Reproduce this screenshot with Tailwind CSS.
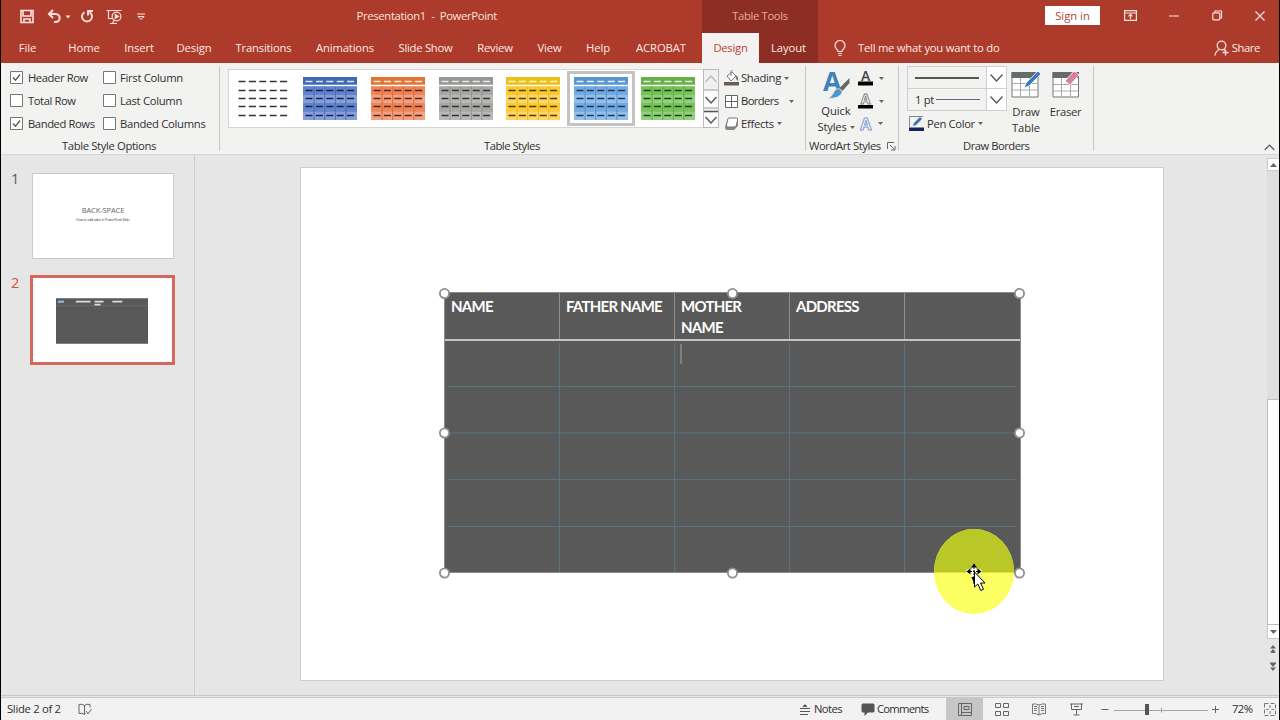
<!DOCTYPE html>
<html lang="en">
<head>
    <meta charset="UTF-8">
    <meta name="viewport" content="width=device-width, initial-scale=1.0">
    <title>Presentation1 - PowerPoint</title>
    <script src="https://cdn.jsdelivr.net/npm/@tailwindcss/browser@4"></script>
</head>
<body class="w-[1280px] h-[720px] overflow-hidden bg-[#e6e6e6]">
<div class="w-[1280px] h-[720px] flex flex-col border-x border-black font-['Open_Sans','Noto_Sans',sans-serif] text-[11.25px] leading-4 text-[#303030] whitespace-nowrap">

    <!-- Title bar -->
    <div class="h-[33px] shrink-0 bg-[#ad3b2c] text-[#fbe3dd] flex">
        <div class="w-[701px] flex items-center relative">
            <svg class="ml-[19px]" width="14" height="15" viewBox="0 0 14 15" fill="none" stroke="#fbe3dd" stroke-width="1.6"><path d="M1 1.5h12v12H1z"/><path d="M3 2v5h8V2M4 13.500v-3.500h6v3.500"/></svg>
            <svg class="ml-[13px]" width="15" height="15" viewBox="0 0 15 15" fill="none" stroke="#fbe3dd" stroke-width="2"><path d="M6 1 2 5l4 4M2 5h6.500c5.500 0 5.500 8 0 8H7"/></svg>
            <svg class="ml-[3px]" width="6" height="4" viewBox="0 0 6 4"><path d="M0.500 .5h5L3 3.500z" fill="#fbe3dd"/></svg>
            <svg class="ml-[9px]" width="14" height="15" viewBox="0 0 14 15" fill="none" stroke="#fbe3dd" stroke-width="1.900"><path d="M4.500 3.200a5 5 0 1 0 5 0"/><path d="M8 6.500V2h5"/></svg>
            <svg class="ml-[12px]" width="17" height="16" viewBox="0 0 17 16" fill="none" stroke="#fbe3dd" stroke-width="1.200"><path d="M.5 1.500h15M2.500 2v7.500h4M4 14.500h7M6.500 14l2-3"/><circle cx="10.500" cy="7.500" r="4.400"/><path d="m9.300 5.500 3.200 2-3.200 2z" fill="#fbe3dd"/></svg>
            <svg class="ml-[14px]" width="8" height="8" viewBox="0 0 8 8" fill="none" stroke="#fbe3dd"><path d="M0 1h8M1 3.500h6L4 6.500z"/></svg>
            <span class="absolute left-[355.5px] top-[8px] whitespace-pre tracking-[-0.31px]">Presentation1  -  PowerPoint</span>
        </div>
        <div class="w-[116px] bg-[#8c2e24] flex items-center justify-center text-[#e8a99f]"><span class="-mt-px tracking-[-0.35px]">Table Tools</span></div>
        <div class="flex-1 flex items-center pb-[2px]">
            <div class="ml-[227px] w-[55px] h-[19px] bg-white text-[#b34435] text-center leading-[19px]">Sign in</div>
            <svg class="ml-[24px]" width="13" height="11" viewBox="0 0 13 11" fill="none" stroke="#fbe3dd" stroke-width="1.200"><path d="M.6.600h11.800v9.800H.6zM.6 3h11.800M6.500 9V4.500M4.500 6.300l2-2 2 2"/></svg>
            <svg class="ml-[32px]" width="10" height="2" viewBox="0 0 10 2"><path d="M0 1h10" stroke="#fbe3dd"/></svg>
            <svg class="ml-[33px]" width="11" height="11" viewBox="0 0 11 11" fill="none" stroke="#fbe3dd" stroke-width="1.200"><rect x=".8" y="2.800" width="7" height="7" rx="1"/><path d="M3 2.500V1h6.500v7H8"/></svg>
            <svg class="ml-[32px]" width="10" height="10" viewBox="0 0 10 10" stroke="#fbe3dd" stroke-width="1.200"><path d="m.5.500 9 9m0-9-9 9"/></svg>
        </div>
    </div>

    <!-- Ribbon tabs -->
    <div class="h-[30px] shrink-0 bg-[#ad3b2c] text-[#fdeae6] flex text-center leading-[30px] tracking-[-0.1px]">
        <div class="w-[53px]">File</div>
        <div class="w-[60px]">Home</div>
        <div class="w-[50px]">Insert</div>
        <div class="w-[60px]">Design</div>
        <div class="w-[79px] tracking-[-0.2px]">Transitions</div>
        <div class="w-[84px] tracking-[-0.15px]">Animations</div>
        <div class="w-[77px] tracking-[-0.25px]">Slide Show</div>
        <div class="w-[62px] tracking-[-0.25px]">Review</div>
        <div class="w-[47px]">View</div>
        <div class="w-[50px]">Help</div>
        <div class="w-[76px]">ACROBAT</div>
        <div class="w-[3px]"></div>
        <div class="w-[57px] bg-[#f3f2f1] text-[#b34435] tracking-[-0.25px]">Design</div>
        <div class="w-[59px] bg-[#8c2e24]">Layout</div>
        <svg class="ml-[16px] mt-[7px]" width="12" height="17" viewBox="0 0 12 17" fill="none" stroke="#fbe3dd" stroke-width="1.200"><path d="M4 11.500c0-2-3-3-3-6a5 5 0 0 1 10 0c0 3-3 4-3 6zM4 13.500h4M4.500 15.500h3"/></svg>
        <div class="ml-[12px] tracking-[-0.24px]">Tell me what you want to do</div>
        <div class="flex-1"></div>
        <svg class="mt-[7px]" width="16" height="17" viewBox="0 0 16 17" fill="none" stroke="#fbe3dd" stroke-width="1.300"><circle cx="7.500" cy="5.500" r="4.300"/><path d="M1 15.500c.5-3.500 2-5 4.500-6M9.500 9.500l2 1.500M11.500 9.500v6M8.500 12.500h6"/></svg>
        <div class="ml-[2px] mr-[19px] tracking-[-0.4px]">Share</div>
    </div>

    <!-- Ribbon -->
    <div class="h-[92px] shrink-0 bg-[#f2f2f1] border-b border-[#d6d6d6] flex tracking-[-0.35px]">
        <div class="w-[219px] flex flex-col border-r border-[#c8c8c8] my-[3px]">
            <div class="flex h-[72px] shrink-0 pl-[9px] pt-[1px]">
                <div class="w-[93px] flex flex-col tracking-[-0.42px]">
                    <div class="h-[22.7px] flex items-center"><svg class="mr-[5px] -mt-px" width="13" height="13" viewBox="0 0 13 13" fill="#fff" stroke="#777"><path d="M.5.500h12v12H.5z"/><path d="m3 6.500 2.500 2.800L10 3.500" fill="none" stroke="#555" stroke-width="1.300"/></svg>Header Row</div>
                    <div class="h-[22.7px] flex items-center"><svg class="mr-[5px] -mt-px" width="13" height="13" viewBox="0 0 13 13" fill="#fff" stroke="#777"><path d="M.5.500h12v12H.5z"/></svg>Total Row</div>
                    <div class="h-[22.7px] flex items-center"><svg class="mr-[5px] -mt-px" width="13" height="13" viewBox="0 0 13 13" fill="#fff" stroke="#777"><path d="M.5.500h12v12H.5z"/><path d="m3 6.500 2.500 2.800L10 3.500" fill="none" stroke="#555" stroke-width="1.300"/></svg>Banded Rows</div>
                </div>
                <div class="flex flex-col tracking-[-0.3px]">
                    <div class="h-[22.7px] flex items-center"><svg class="mr-[4px] -mt-px" width="13" height="13" viewBox="0 0 13 13" fill="#fff" stroke="#777"><path d="M.5.500h12v12H.5z"/></svg>First Column</div>
                    <div class="h-[22.7px] flex items-center"><svg class="mr-[4px] -mt-px" width="13" height="13" viewBox="0 0 13 13" fill="#fff" stroke="#777"><path d="M.5.500h12v12H.5z"/></svg>Last Column</div>
                    <div class="h-[22.7px] flex items-center"><svg class="mr-[4px] -mt-px" width="13" height="13" viewBox="0 0 13 13" fill="#fff" stroke="#777"><path d="M.5.500h12v12H.5z"/></svg>Banded Columns</div>
                </div>
            </div>
            <div class="text-center pr-[2px]">Table Style Options</div>
        </div>

        <div class="w-[586px] flex flex-col border-r border-[#c8c8c8] my-[3px] pl-[8px]">
            <div class="flex h-[72px] shrink-0 pt-[3px]">
                <div id="gallery" class="w-[475px] h-[59px] bg-white border border-r-0 border-[#d5d5d5] flex items-center"></div>
                <div class="w-[16px] h-[59px] flex flex-col border border-[#bbb]">
                    <svg width="14" height="57" viewBox="0 0 14 57" fill="none" stroke="#555" stroke-width="1.300"><path d="M0 0h14v19.500H0z" fill="#f0f0f0" stroke="none"/><path d="M0 20h14v18H0zM0 43h14v14H0z" fill="#fbfbfb" stroke="none"/><path d="M0 20h14M0 38h14" stroke="#bbb"/><path d="M0 41.500h14" stroke-width="1.500"/><path d="m1.500 12 5.500-6 5.500 6" stroke="#bbb"/><path d="m1.500 27 5.500 6 5.500-6M1.500 47l5.500 6 5.500-6"/></svg>
                </div>
                <div class="flex flex-col pl-[5px] -mt-[2px] tracking-[-0.3px]">
                    <div class="h-[22.7px] flex items-center"><svg class="mr-[1px]" width="16" height="16" viewBox="0 0 16 16"><path d="M0 12h15v3.500H0z" fill="#6b5a55"/><path d="m3 6 5-4 4 4-5 5z" fill="#fff" stroke="#777"/><path d="M7 6V1.500q0-1 1.500-1" fill="none" stroke="#777"/><path d="M11 5q4 1 3 6-2-1-3-6" fill="#5f7890"/></svg>Shading<svg class="ml-[3px]" width="5" height="3" viewBox="0 0 5 3"><path d="M0 0h5L2.500 3z" fill="#666"/></svg></div>
                    <div class="h-[22.7px] flex items-center"><svg class="mr-[3px] ml-px" width="13" height="13" viewBox="0 0 13 13" fill="#fff" stroke="#666"><path d="M.5.500h12v12H.5zM6.500.500v12M.5 6.500h12"/></svg><span class="tracking-[-0.6px]">Borders</span><svg class="ml-[10px]" width="5" height="3" viewBox="0 0 5 3"><path d="M0 0h5L2.500 3z" fill="#666"/></svg></div>
                    <div class="h-[22.7px] flex items-center"><svg class="mr-[2px]" width="15" height="14" viewBox="0 0 15 14"><path d="M3 4 1 10q0 3 2 3h7l4-4V3z" fill="#888"/><path d="M5 1h7q2 0 1.500 2l-1 5q-.5 2-2.500 2H4q-2 0-1.500-2l1-5Q3.800 1 5 1z" fill="#fff" stroke="#777"/></svg>Effects<svg class="ml-[3px]" width="5" height="3" viewBox="0 0 5 3"><path d="M0 0h5L2.500 3z" fill="#666"/></svg></div>
                </div>
            </div>
            <div class="pl-[256px] tracking-[-0.5px]">Table Styles</div>
        </div>

        <div class="w-[93px] flex flex-col border-r border-[#c8c8c8] my-[3px]">
            <div class="flex h-[72px] shrink-0">
                <div class="w-[51px] flex flex-col items-center pl-[9px] pt-[3px]">
                    <svg class="mb-[3px] shrink-0 ml-[2px] overflow-visible" width="28" height="31" viewBox="0 0 28 31"><text x="0" y="21.500" font-family="Open Sans" font-weight="700" font-size="27" fill="#3d82b8" textLength="18" lengthAdjust="spacingAndGlyphs">A</text><path d="M26.500 9v5l-7 8-3-3z" fill="#666"/><path d="M15.500 19.500q4 1 3.500 4-2 6-14 6 4-2 5-5 2-5 5.500-5z" fill="#4f97cc" stroke="#f2f2f1" stroke-width=".7"/></svg>
                    <div class="tracking-[-0.1px]">Quick</div>
                    <div class="flex items-center tracking-[-0.2px]">Styles<svg class="ml-[3px]" width="5" height="3" viewBox="0 0 5 3"><path d="M0 0h5L2.500 3z" fill="#666"/></svg></div>
                </div>
                <div class="flex flex-col pt-[1px]">
                    <div class="h-[22.7px] flex items-center"><svg class="overflow-visible" width="17" height="16" viewBox="0 0 17 16"><text x="8.500" y="11" text-anchor="middle" font-family="Open Sans" font-size="14" font-weight="600" fill="#444">A</text><path d="M1 11.500h15v4H1z"/></svg><svg class="ml-[5px]" width="5" height="3" viewBox="0 0 5 3"><path d="M0 0h5L2.500 3z" fill="#666"/></svg></div>
                    <div class="h-[22.7px] flex items-center"><svg class="overflow-visible" width="17" height="16" viewBox="0 0 17 16"><text x="8.500" y="11" text-anchor="middle" font-family="Open Sans" font-size="14" font-weight="700" fill="#fff" stroke="#777" stroke-width=".8">A</text><path d="M1 12h15v3.500H1z"/></svg><svg class="ml-[5px]" width="5" height="3" viewBox="0 0 5 3"><path d="M0 0h5L2.500 3z" fill="#666"/></svg></div>
                    <div class="h-[22.7px] flex items-center"><svg class="overflow-visible" width="17" height="16" viewBox="0 0 17 16"><text x="8.500" y="13.500" text-anchor="middle" font-family="Open Sans" font-size="16" font-weight="700" fill="#fff" stroke="#7f9fd0">A</text></svg><svg class="ml-[4px]" width="5" height="3" viewBox="0 0 5 3"><path d="M0 0h5L2.500 3z" fill="#666"/></svg></div>
                </div>
            </div>
            <div class="flex pl-[3px] tracking-[-0.42px]">WordArt Styles<svg class="ml-[6px] mt-[4px] shrink-0" width="9" height="9" viewBox="0 0 9 9" fill="none" stroke="#666"><path d="M.5 7V.5H7M3 3l4.500 4.500M8 4v4H4"/></svg></div>
        </div>

        <div class="w-[195px] flex flex-col border-r border-[#c8c8c8] my-[3px] pl-[8px]">
            <div class="flex h-[72px] shrink-0">
                <div class="flex flex-col w-[100px]">
                    <div class="h-[23px] flex border border-[#cfcfcf]">
                        <div class="flex-1 flex items-center justify-center"><div class="w-[64px] h-[2px] bg-[#555]"></div></div>
                        <div class="w-[20px] bg-white border-l border-[#cfcfcf] flex items-center justify-center"><svg width="13" height="8" viewBox="0 0 13 8" fill="none" stroke="#555" stroke-width="1.300"><path d="m.5.500 6 6.500 6-6.500"/></svg></div>
                    </div>
                    <div class="h-[22px] flex border-x border-b border-[#cfcfcf]">
                        <div class="flex-1 flex items-center pl-[7px]">1 pt<div class="ml-[2px] w-[44px] h-px bg-[#5b6b88]"></div></div>
                        <div class="w-[20px] bg-white border-l border-[#cfcfcf] flex items-center justify-center"><svg width="13" height="8" viewBox="0 0 13 8" fill="none" stroke="#555" stroke-width="1.300"><path d="m.5.500 6 6.500 6-6.500"/></svg></div>
                    </div>
                    <div class="h-[25px] flex items-center pl-[2px]"><svg class="mr-[3px]" width="15" height="15" viewBox="0 0 15 15"><path d="M.5 11V.5H14" fill="none" stroke="#888"/><path d="M0 11.500h15V15H0z" fill="#14245c"/><path d="m4 10 1-3 6-6 2 2-6 6z" fill="#3d6ea8"/></svg>Pen Color<svg class="ml-[3px]" width="5" height="3" viewBox="0 0 5 3"><path d="M0 0h5L2.500 3z" fill="#666"/></svg></div>
                </div>
                <div class="w-[38px] flex flex-col items-center pt-[2px] leading-[15.5px] tracking-[-0.1px]">
                    <svg class="mb-[5px] shrink-0" width="32" height="31" viewBox="0 0 32 31"><path d="M2 4.500h26V29H2z" fill="#fff" stroke="#777"/><path d="M1.500 4h27v6h-27z" fill="#666b6b"/><path d="M2 15.500h26M2 22h26M10.500 10v19M19.500 10v19" stroke="#aaa" fill="none"/><path d="m14 20 2-5L28 3l3 3-12 12z" fill="#3f79c4" stroke="#fff" stroke-width=".8"/></svg>
                    <div>Draw</div><div>Table</div>
                </div>
                <div class="w-[42px] flex flex-col items-center pt-[2px] leading-[15.5px]">
                    <svg class="mb-[5px] shrink-0" width="32" height="31" viewBox="0 0 32 31"><path d="M3 4.500h25.500V29H3z" fill="#fff" stroke="#777"/><path d="M2.500 4H29v6H2.500z" fill="#666b6b"/><path d="M3 16.500h25M3 23h25M11.500 10v19M20.500 10v19" stroke="#aaa" fill="none"/><path d="m15 13 9-10 5 4-9 10z" fill="#dc7f9e" stroke="#fff" stroke-width=".8"/></svg>
                    <div class="-ml-px">Eraser</div>
                </div>
            </div>
            <div class="pl-[56px] tracking-[-0.5px]">Draw Borders</div>
        </div>
        <div class="flex-1 flex items-end justify-end pb-[3px] pr-[4px]"><svg width="11" height="7" viewBox="0 0 11 7" fill="none" stroke="#555" stroke-width="1.200"><path d="m.7 6 4.800-5 4.800 5"/></svg></div>
    </div>

    <!-- Workspace -->
    <div class="h-[540px] shrink-0 flex">
        <div class="w-[194px] border-r border-[#cdcdcd] pt-[18px]">
            <div class="flex h-[102px]">
                <div class="w-[31px] pl-[10px] text-[14.5px] leading-[12px] text-[#5a5a5a]">1</div>
                <div class="w-[142px] h-[86px] bg-white border border-[#c9c9c9] flex flex-col items-center pt-[31px]">
                    <div class="text-[7.5px] leading-[11px] text-[#666] tracking-[-0.1px]">BACK-SPACE</div>
                    <div class="text-[3.1px] leading-[8px] text-[#222]">How to add table in PowerPoint Slide</div>
                </div>
            </div>
            <div class="flex">
                <div class="w-[29px] pl-[10px] pt-[2px] text-[14.5px] leading-[12px] text-[#d05546]">2</div>
                <div class="w-[145px] h-[90px] bg-white border-[3px] border-[#d4685b] pl-[23px] pt-[20px]">
                    <svg width="92" height="46" viewBox="0 0 93 46"><path d="M0 0h93v46H0z" fill="#595959"/><path d="M0 7.500h93" stroke="#777" stroke-width=".6"/><path d="M2 3.500h6" stroke="#8fc3e8" stroke-width="2"/><path d="M20 3.500h15M39 3.500h9M39 6.500h6M57 3.500h10" stroke="#ddd" stroke-width="1.800"/></svg>
                </div>
            </div>
        </div>
        <div class="flex-1 pl-[105px] pt-[12px]">
            <div class="w-[864px] h-[514px] bg-white border border-[#cfcfcf] relative">
                <!-- Selected table -->
                <div class="absolute left-[143px] top-[124px] w-[577px] h-[281px] bg-[#595959] border border-[#8c8c8c]">
                    <div class="h-[48px] grid grid-cols-5 border-b-2 border-[#c4c4c4] font-['Lato',sans-serif] font-bold text-[15px] leading-[21px] tracking-[-0.75px] text-white">
                        <div class="border-r border-[#8f8f8f] pl-[6px] pt-[3px]">NAME</div>
                        <div class="border-r border-[#8f8f8f] pl-[6px] pt-[3px]">FATHER NAME</div>
                        <div class="border-r border-[#8f8f8f] pl-[6px] pt-[3px]">MOTHER<br>NAME</div>
                        <div class="border-r border-[#8f8f8f] pl-[6px] pt-[3px]">ADDRESS</div>
                        <div></div>
                    </div>
                    <svg width="575" height="231" viewBox="0 0 575 231" fill="none"><path d="M3 45.500h569M3 92h569M3 138.500h569M3 185.500h569M114.500 2v229M229.500 2v229M344.500 2v229M459.500 2v229" stroke="#5b7280" stroke-width="1.200"/><path d="M236 3v20" stroke="#a5a5a5"/></svg>
                </div>
                <svg class="absolute left-[136px] top-[117px]" width="593" height="297" viewBox="0 0 593 297" fill="#fff" stroke="#8f8f8f" stroke-width="1.800"><circle cx="7.500" cy="8.500" r="4.600"/><circle cx="295.500" cy="8.500" r="4.600"/><circle cx="582.500" cy="8.500" r="4.600"/><circle cx="7.500" cy="148" r="4.600"/><circle cx="582.500" cy="148" r="4.600"/><circle cx="7.500" cy="288" r="4.600"/><circle cx="295.500" cy="288" r="4.600"/><circle cx="582.500" cy="288" r="4.600"/></svg>
                <!-- Click highlight and move pointer -->
                <svg class="absolute left-[630px] top-[358px]" width="88" height="92" viewBox="0 0 88 92"><ellipse cx="43" cy="45.500" rx="40" ry="42.500" fill="#fbff61"/><path d="M3 46.500v-1a40 42.500 0 0 1 80 0v1z" fill="#b9c827"/><path d="M43 39v16M35.500 45.500h15" stroke="#fff" stroke-width="4"/><path d="M43 38v20M36 45.500h14" stroke="#000" stroke-dasharray="2 1"/><path d="m43 37.500 3 4h-6zM35.500 45.500l4-3v6zM50.500 45.500l-4-3v6zM40.500 51h3v8z"/><path d="M43.500 46v15l3.300-3 3 6.500 2.700-1.200-3-6.300h4.500z" fill="#fff" stroke="#000"/></svg>
            </div>
        </div>
        <div class="w-[12px] flex flex-col items-center mt-[3px]">
            <div class="w-[12px] h-[13px] bg-white border border-r-0 border-[#c9c9c9] flex items-center justify-center"><svg width="7" height="4" viewBox="0 0 7 4"><path d="M0 4h7L3.500 0z" fill="#666"/></svg></div>
            <div class="w-[12px] h-[228px] bg-[#dedede]"></div>
            <div class="w-[12px] h-[226px] bg-white border border-r-0 border-[#bdbdbd]"></div>
            <div class="w-[12px] h-[14px] bg-white border-l border-b border-[#c9c9c9] flex items-center justify-center"><svg width="7" height="4" viewBox="0 0 7 4"><path d="M0 0h7L3.500 4z" fill="#666"/></svg></div>
            <svg class="mt-[5px]" width="8" height="28" viewBox="0 0 8 28" fill="#666"><path d="M4 1l3 3.500H1zM4 5l3 3.500H1zM2.500 8h3v1h-3zM4 27l3-3.500H1zM4 23l3-3.500H1zM1 18.500h6v1H1z"/></svg>
        </div>
    </div>

    <!-- Status bar -->
    <div class="h-[3px] shrink-0 border-y border-[#c8c8c8]"></div>
    <div class="h-[22px] shrink-0 bg-[#f2f2f2] flex items-center">
        <div class="ml-[6px] w-[71px] tracking-[-0.3px]">Slide 2 of 2</div>
        <svg width="14" height="13" viewBox="0 0 14 13" fill="none" stroke="#666"><path d="M6.500 2.500Q4 .5 1 1.500v9q3-1 5.500 1zM6.500 2.500Q9 .5 12 1.500v3M6.500 11.500l1-.8M8 8l2 3 3.500-5"/></svg>
        <div class="flex-1"></div>
        <svg width="12" height="13" viewBox="0 0 12 13" fill="none" stroke="#555" stroke-width="1.100"><path d="M1 5.500h10M1 8.500h10M1 11.500h8"/><path d="M6 1l2.500 3h-5z" fill="#555" stroke="none"/></svg>
        <div class="ml-[3px] w-[47px] tracking-[-0.6px]">Notes</div>
        <svg width="14" height="13" viewBox="0 0 14 13"><path d="M2 .5h10q1.500 0 1.500 1.500v6Q13.500 9.500 12 9.500H7L3.500 13V9.500H2Q.5 9.500.5 8V2Q.5.500 2 .5z" fill="#555"/></svg>
        <div class="ml-[2px] w-[69px] tracking-[-0.75px]">Comments</div>
        <div class="w-[37px] h-full bg-[#c6c6c6] flex items-center justify-center"><svg width="14" height="13" viewBox="0 0 14 13" fill="none" stroke="#666"><path d="M.5.500h13v12H.5zM3.500.500v12M3.500 9.500h10M6 3.500h5v3H6z"/></svg></div>
        <svg class="ml-[12px]" width="14" height="13" viewBox="0 0 14 13" fill="none" stroke="#666"><path d="M.5.500h5v4h-5zM8.500.500h5v4h-5zM.5 8.500h5v4h-5zM8.500 8.500h5v4h-5z"/></svg>
        <svg class="ml-[23px]" width="14" height="13" viewBox="0 0 14 13" fill="none" stroke="#777"><path d="M7 2Q4 .5.500 1v9.500Q4 10 7 12q3-2 6.500-1.500V1Q10 .5 7 2zv10M2 3.500h3M2 5.500h3M2 7.500h3M9 3.500h3M9 5.500h3M9 7.500h3"/></svg>
        <svg class="ml-[24px]" width="13" height="13" viewBox="0 0 13 13" fill="none" stroke="#666"><path d="M0 1h13M1.500 1v5.500h10V1M6.500 6.500V12M3.500 12h6M4 3.500h5"/></svg>
        <svg class="ml-[17px]" width="119" height="13" viewBox="0 0 119 13" fill="none" stroke="#666"><path d="M1.500 6.500h7M115.500 3v7M112 6.500h7"/><path d="M14 7.500h94M61.500 4.500v5" stroke="#a5a5a5"/><path d="M45 1h4v11h-4z" fill="#555" stroke="none"/></svg>
        <div class="ml-[13px] w-[32px] tracking-[-0.6px]">72%</div>
        <svg class="mr-[3px]" width="12" height="13" viewBox="0 0 12 13" fill="none" stroke="#777"><path d="M.5.500h11v12H.5z" stroke-dasharray="4 2"/><path d="M6 2v3M6 8v3M2 6.500h2.500M7.500 6.500H10"/></svg>
    </div>
</div>

<script>
    // header, band, lighter band, grid line, dash, header dash
    const styles = [
        ['none', 'none', 'none', 'none', '#333', '#333'],
        ['#4068b5', '#6383cb', '#869fda', '#4b6cb8', '#15244f', '#dbe5f8'],
        ['#e07636', '#ec8558', '#f3a183', '#d96a35', '#5f2413', '#fbe0d0'],
        ['#979795', '#a7a7a5', '#b8b8b6', '#92928f', '#333', '#e8e8e8'],
        ['#efbf15', '#fbcb35', '#fdd665', '#ecb71c', '#4d3a08', '#fff3c0'],
        ['#5497d1', '#75aae0', '#94bfea', '#5590cc', '#16395c', '#e4f1fb'],
        ['#66b045', '#77c25b', '#93d07b', '#5eaa40', '#1a4510', '#e0f3d6'],
    ];
    const gallery = document.getElementById('gallery');
    styles.forEach((s, i) => {
        let svg = `<rect width="54" height="43" fill="${s[0]}"/>`;
        [9.5, 18, 26, 34.5].forEach((y, r) => {
            svg += `<rect y="${y}" width="54" height="8.5" fill="${s[1 + r % 2]}"/>`;
        });
        if (i > 0) {
            svg += '<path d="M0 8.500h54" stroke="#fff" stroke-width="1.400"/>';
        }
        for (let c = 1; c < 5; c++) {
            svg += `<path d="M${c * 10.6 + .5} 9.500V43" stroke="${s[3]}"/>`;
        }
        [4.5, 13.5, 21.5, 29.5, 38.5].forEach((y, r) => {
            for (let c = 0; c < 5; c++) {
                svg += `<path d="M${2.5 + c * 10.4} ${y}h7" stroke="${r ? s[4] : s[5]}" stroke-width="1.500"/>`;
            }
        });
        const cell = document.createElement('div');
        cell.className = 'w-[67.6px] h-[55px] shrink-0 flex items-center justify-center';
        if (i === 5) cell.className += ' border-3 border-[#c3c3c3]';
        cell.innerHTML = `<svg class="shrink-0" width="54" height="43" viewBox="0 0 54 43">${svg}</svg>`;
        gallery.appendChild(cell);
    });
</script>
</body>
</html>
